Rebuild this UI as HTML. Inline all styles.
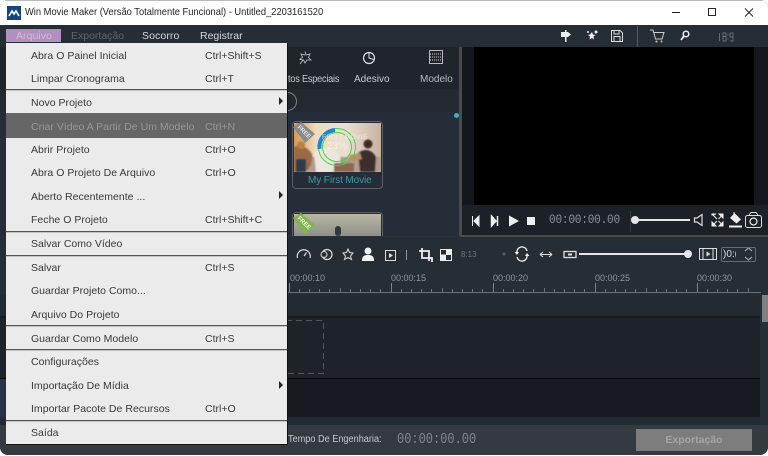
<!DOCTYPE html>
<html><head><meta charset="utf-8"><style>
html,body{margin:0;padding:0;width:768px;height:456px;overflow:hidden;background:#fff}
*{box-sizing:border-box}
body{font-family:"Liberation Sans","Noto Sans CJK SC",sans-serif;position:relative}
.a{position:absolute}
.t{position:absolute;white-space:nowrap;line-height:14px}
.m{position:absolute;left:31px;margin-top:1px;white-space:nowrap;font-size:10.5px;line-height:14px;color:#383838;letter-spacing:.02px}
.s{position:absolute;left:205px;margin-top:1px;white-space:nowrap;font-size:10.5px;line-height:14px;color:#383838}
.sep{position:absolute;left:6px;width:281px;background:#555;border-bottom:1px solid #c4c4c4;height:2px}
.arr{position:absolute;left:279px;width:0;height:0;border-left:4px solid #222;border-top:4px solid transparent;border-bottom:4px solid transparent}
.tc{position:absolute;font-size:9px;color:#8f979c;line-height:12px}
</style></head><body>
<div class="a" style="left:0;top:0;width:768px;height:455px;background:#2a3138;border-radius:8px;overflow:hidden;filter:blur(.3px)">

<!-- title bar -->
<div class="a" style="left:0;top:0;width:768px;height:25px;background:#fff;border-top:1px solid #bbb"></div>
<svg class="a" style="left:7px;top:6px" width="14" height="14" viewBox="0 0 14 14"><rect width="14" height="14" fill="#14477f"/><path d="M2 10 L5 5 L7 8 L9 5 L12 10" fill="none" stroke="#fff" stroke-width="1.6"/></svg>
<div class="t" style="left:25px;top:5px;font-size:10.5px;color:#222;transform:scaleX(.889);transform-origin:left">Win Movie Maker (Versão Totalmente Funcional) - Untitled_2203161520</div>
<svg class="a" style="left:670px;top:4px" width="98" height="20" viewBox="0 0 98 20"><path d="M2 8.500H10" stroke="#222" stroke-width="1.100"/><rect x="38.500" y="4.500" width="7" height="7" fill="none" stroke="#222" stroke-width="1"/><path d="M75 4.500L83 12.500M83 4.500L75 12.500" stroke="#222" stroke-width="1"/></svg>

<!-- menu bar -->
<div class="a" style="left:0;top:25px;width:768px;height:22px;background:#252d35"></div>
<div class="a" style="left:6px;top:29px;width:55px;height:13px;background:#b18fbe"></div>
<div class="t" style="left:16px;top:29px;font-size:10.5px;color:#d0bcd8;letter-spacing:.05px">Arquivo</div>
<div class="t" style="left:71px;top:29px;font-size:10.5px;color:#5f666c">Exportação</div>
<div class="t" style="left:142px;top:29px;font-size:10.5px;color:#d6d9db;letter-spacing:.1px">Socorro</div>
<div class="t" style="left:200px;top:29px;font-size:10.5px;color:#d6d9db">Registrar</div>

<!-- toolbar right icons -->
<svg class="a" style="left:555px;top:26px" width="200" height="21" viewBox="0 0 200 21">
<path d="M6 6H13L16 8.500L13 11H6Z M10 4H11.500V16H10Z" fill="#eee"/>
<path d="M37 6L38 8.500L40.500 9L38.500 10.500L39 13.500L37 12L34.500 13.500L35 10.500L33 9L35 8.500Z" fill="#eee"/><circle cx="41" cy="6" r="1.500" fill="#eee"/><circle cx="33" cy="6" r="1" fill="#eee"/>
<path d="M56.500 4.500H65L67.500 7V15.500H56.500ZM59 4.500V8H64V4.500M59 15.500V10.500H65V15.500" fill="none" stroke="#ddd" stroke-width="1"/>
<rect x="82" y="0" width="1" height="21" fill="#555b60"/>
<path d="M95 4H98L100.500 13H107L109 6.500H99" fill="none" stroke="#ccc" stroke-width="1"/><circle cx="101.500" cy="15.500" r="1" fill="#ccc"/><circle cx="106.500" cy="15.500" r="1" fill="#ccc"/>
<circle cx="131" cy="8" r="2.800" fill="none" stroke="#eee" stroke-width="1.500"/><path d="M129 10L126 14" stroke="#eee" stroke-width="1.800"/>
<path d="M164.500 7V15M168 7H171V15H168ZM168 10.500H171M178 7H175V11H178V7ZM178 7V15H175" fill="none" stroke="#7f868b" stroke-width=".7"/><circle cx="173" cy="9" r=".5" fill="#7f868b"/><circle cx="173" cy="13" r=".5" fill="#7f868b"/>
</svg>

<!-- library panel -->
<div class="a" style="left:0;top:47px;width:460px;height:42px;background:#1f252b"></div>
<div class="a" style="left:0;top:89px;width:460px;height:23px;background:#23292f"></div>
<div class="a" style="left:0;top:112px;width:459px;height:124px;background:#262c38"></div>
<div class="a" style="left:459px;top:47px;width:3px;height:189px;background:#4b4c49"></div>
<div class="a" style="left:287px;top:92px;width:10px;height:19px;border:1px solid #7c8388;border-left:0;border-radius:0 10px 10px 0"></div>
<div class="a" style="left:454px;top:113px;width:5px;height:5px;border-radius:3px;background:#37b5bb"></div>

<svg class="a" style="left:296px;top:49px" width="18" height="18" viewBox="0 0 18 18"><path d="M9 2.500L10 6L14 5L12.500 8.500L15 11L11 11L9 14L7.500 11L4 10.500L6.500 8L5 5L9 6M4 15L7 11" fill="none" stroke="#c6c9cb" stroke-width=".8"/></svg>
<div class="t" style="left:288px;top:73px;font-size:10px;color:#c6cbce;letter-spacing:-.2px;transform:scaleX(.91);transform-origin:left">tos Especiais</div>
<svg class="a" style="left:361px;top:50px" width="16" height="16" viewBox="0 0 16 16"><circle cx="8" cy="8" r="5.500" fill="none" stroke="#dfe2e3" stroke-width="1.200"/><path d="M8 3V8L12.500 9.500" fill="none" stroke="#dfe2e3" stroke-width="1"/></svg>
<div class="t" style="left:354px;top:73px;font-size:10px;color:#c6cbce">Adesivo</div>
<svg class="a" style="left:428px;top:49px" width="16" height="16" viewBox="0 0 16 16"><rect x="1.500" y="1.500" width="13" height="13" fill="none" stroke="#b8bbbd" stroke-width="1"/><path d="M2 5H14M2 8H14M2 11H14" stroke="#999" stroke-width="1.500" stroke-dasharray="1 1"/></svg>
<div class="t" style="left:420px;top:73px;font-size:10px;color:#b4b9bc">Modelo</div>

<!-- thumbnails -->
<div class="a" style="left:292px;top:121px;width:91px;height:68px;border:1px solid #5b6067;border-radius:4px;background:#262c38"></div>
<svg class="a" style="left:294px;top:123px" width="87" height="49" viewBox="0 0 87 49">
<defs><linearGradient id="sky" x1="0" x2="1" y1="0" y2="0"><stop offset="0" stop-color="#d59a55"/><stop offset=".25" stop-color="#efdcc0"/><stop offset=".6" stop-color="#eadfd2"/><stop offset="1" stop-color="#c9b3a1"/></linearGradient><filter id="b"><feGaussianBlur stdDeviation=".7"/></filter></defs>
<rect width="87" height="49" fill="url(#sky)"/>
<g filter="url(#b)">
<rect x="0" y="34" width="87" height="15" fill="#b29c8a"/>
<path d="M0 24C6 21 14 24 18 31C19 38 16 49 8 49H0Z" fill="#9a6a45"/>
<path d="M2 36H12V49H2Z" fill="#2d3a4d"/>
<circle cx="7" cy="22" r="4" fill="#b98044"/>
<path d="M20 30C28 22 42 24 46 34C48 42 44 49 36 49H22Z" fill="#ece6df"/>
<circle cx="74" cy="21" r="4.500" fill="#3c2a22"/>
<path d="M64 30C70 25 78 26 82 34L81 49H66Z" fill="#3e2f2d"/>
<path d="M55 32L66 30L68 36L58 38Z" fill="#bb8d68"/>
<rect x="40" y="40" width="20" height="9" fill="#8d6850"/>
</g></svg>
<svg class="a" style="left:316px;top:126px" width="44" height="44" viewBox="0 0 44 44"><circle cx="21" cy="21" r="18.500" fill="none" stroke="#49d24a" stroke-width="1"/><circle cx="21" cy="21" r="14.500" fill="none" stroke="#49d24a" stroke-width="1"/><path d="M3.500 23A17 17 0 0 1 19 4" fill="none" stroke="#1f83d8" stroke-width="4"/></svg>
<div class="t" style="left:322px;top:131px;font-size:6.500px;color:#f7f2ea;opacity:.8;letter-spacing:.4px">FIRST MOVIE</div>
<div class="t" style="left:327px;top:140px;font-size:10px;color:#f7f2ea;opacity:.9">23%</div>
<svg class="a" style="left:292px;top:121px" width="26" height="26" viewBox="0 0 26 26"><path d="M1 6L9 1L23 13L13 22Z" fill="#8a8a8a"/><text x="12" y="11" transform="rotate(45 12 11)" text-anchor="middle" dominant-baseline="middle" font-size="6" font-weight="700" fill="#e5e5e5" font-family="Liberation Sans">FREE</text></svg>
<div class="t" style="left:308px;top:174px;font-size:10px;color:#3d9ba3;letter-spacing:-.1px">My First Movie</div>

<div class="a" style="left:292px;top:212px;width:91px;height:24px;border:1px solid #5b6067;border-bottom:0;border-radius:4px 4px 0 0;background:#262c38"></div>
<div class="a" style="left:294px;top:214px;width:87px;height:22px;background:linear-gradient(#b9b7a5,#8e8f89)"></div>
<div class="a" style="left:335px;top:226px;width:6px;height:10px;background:#33363c;border-radius:3px"></div>
<svg class="a" style="left:292px;top:212px" width="26" height="24" viewBox="0 0 26 24"><path d="M1 6L9 1L23 13L13 22Z" fill="#7fb54c"/><text x="12" y="11" transform="rotate(45 12 11)" text-anchor="middle" dominant-baseline="middle" font-size="6" font-weight="700" fill="#eef5e0" font-family="Liberation Sans">FREE</text></svg>

<!-- preview -->
<div class="a" style="left:462px;top:47px;width:306px;height:189px;background:#14181c"></div>
<div class="a" style="left:474px;top:47px;width:280px;height:158px;background:#000"></div>
<div class="a" style="left:462px;top:205px;width:306px;height:31px;background:#1b2126"></div>
<div class="a" style="left:460px;top:235px;width:308px;height:2px;background:#4b4c49"></div>
<svg class="a" style="left:462px;top:205px" width="306" height="30" viewBox="0 0 306 30">
<path d="M10.500 11V21M12 16L17 11V21Z" fill="#eee" stroke="#eee" stroke-width="1"/>
<path d="M29.500 11L34 16L29.500 21ZM35.500 11V21" fill="#eee" stroke="#eee" stroke-width="1.500"/>
<path d="M47 10.500L57 16L47 21.500Z" fill="#eee"/>
<rect x="65" y="12" width="8" height="8" fill="#eee"/>
<rect x="168" y="6" width="1" height="21" fill="#33393e"/>
<rect x="172" y="14" width="56" height="2" fill="#e6e6e6"/><circle cx="173" cy="15" r="4" fill="#e6e6e6"/>
<path d="M232.500 13H235L240 9.500V20.500L235 17H232.500Z" fill="none" stroke="#ddd" stroke-width="1.200"/>
<path d="M250 10V9H254ZM261 9H257L261 13ZM250 21H254L250 17ZM261 21H257L261 17Z" fill="#eee" stroke="#eee"/>
<path d="M250.500 9.500L255 14M261 9.500L256.500 14M250.500 20.500L255 16M261 20.500L256.500 16" stroke="#eee" stroke-width="1"/>
<path d="M272.500 8L279 14.500L274.500 18.500L268 13Z" fill="#eee"/><path d="M272 7V10" stroke="#eee"/>
<rect x="267" y="20.500" width="13" height="2" fill="#eee"/>
<rect x="283.500" y="10.500" width="16" height="12" rx="2" fill="none" stroke="#ddd" stroke-width="1"/><circle cx="291.500" cy="16.500" r="3.500" fill="none" stroke="#eee" stroke-width="1.200"/><path d="M287 10L289 7.500H294L296 10" fill="none" stroke="#ddd"/>
</svg>
<div class="t" style="left:549px;top:213px;font-size:13px;color:#8a9094;font-family:'Liberation Mono',monospace;transform:scaleX(.86);transform-origin:left;letter-spacing:-.3px">00:00:00.00</div>

<!-- timeline -->
<div class="a" style="left:0;top:237px;width:768px;height:36px;background:#262e35"></div>
<div class="a" style="left:0;top:273px;width:768px;height:22px;background:#262e35"></div>
<svg class="a" style="left:288px;top:245px" width="480" height="20" viewBox="0 0 480 20">
<path d="M9.500 13A6.500 6.500 0 1 1 22 13M16 11L18.500 7.500" fill="none" stroke="#ddd" stroke-width="1.200"/>
<circle cx="39" cy="9.500" r="5" fill="none" stroke="#ddd" stroke-width="1.200"/><circle cx="36" cy="9.500" r="3" fill="#262e35" stroke="#ddd"/>
<path d="M60 4L61.500 7.500L65 8L62.500 11L63.500 14.500L60 12.500L56.500 14.500L57.500 11L55 8L58.500 7.500Z" fill="none" stroke="#ddd" stroke-width="1"/>
<circle cx="80" cy="6" r="3.500" fill="#f2f2f2"/><path d="M74 16C74 11 76 10 80 10C84 10 86 11 86 16Z" fill="#f2f2f2"/>
<rect x="97.500" y="5.500" width="10" height="10" fill="none" stroke="#ddd"/><path d="M101 8L105 10.500L101 13Z" fill="#ddd"/>
<rect x="118" y="5" width="1" height="10" fill="#8d9296"/>
<path d="M134 3V13H144V17M131 6H141V16" fill="none" stroke="#f0f0f0" stroke-width="1.800"/>
<rect x="152.500" y="4.500" width="11" height="11" fill="none" stroke="#eee"/><rect x="153" y="9.500" width="5" height="5.500" fill="#eee"/><rect x="158" y="5" width="5" height="5" fill="#eee"/>
<circle cx="216" cy="9" r="1.500" fill="#555c62"/>
<path d="M239 6A5 5 0 0 0 229 8M229 12A5 5 0 0 0 239 10" fill="none" stroke="#eee" stroke-width="1.300"/><path d="M226.500 7H231L229 10ZM241.500 11H237L239 8Z" fill="#eee"/>
<path d="M252 9.500H264M252 9.500L255 7M252 9.500L255 12M264 9.500L261 7M264 9.500L261 12" fill="none" stroke="#ddd"/>
<rect x="276" y="6.500" width="12" height="6" fill="none" stroke="#ddd" stroke-width="1.300"/><rect x="280" y="8.500" width="4" height="2" fill="#ddd"/>
<rect x="291" y="8" width="107" height="2" fill="#e6e6e6"/><circle cx="400" cy="9" r="4" fill="#e6e6e6"/>
<rect x="411.500" y="3.500" width="17" height="11" fill="none" stroke="#ddd"/><path d="M415 4V14M425 4V14" stroke="#ddd"/><path d="M418.500 6.500L422.500 9L418.500 11.500Z" fill="#ddd"/>
<path d="M457 6L460.500 3L464 6M457 12L460.500 15L464 12" fill="none" stroke="#bbb"/>
</svg>
<div class="a" style="left:721px;top:247px;width:35px;height:15px;border:1px solid #666c71;border-radius:2px"></div>
<div class="t" style="left:723px;top:248px;font-size:10px;color:#d6d8da;width:13px;overflow:hidden">)0:(</div>
<div class="t" style="left:461px;top:248px;font-size:8px;color:#6d7378">8:13</div>

<!-- ruler -->
<div class="tc" style="left:290px;top:272px">00:00:10</div>
<div class="tc" style="left:391px;top:272px">00:00:15</div>
<div class="tc" style="left:493px;top:272px">00:00:20</div>
<div class="tc" style="left:595px;top:272px">00:00:25</div>
<div class="tc" style="left:697px;top:272px">00:00:30</div>
<svg class="a" style="left:288px;top:282px" width="480" height="12" viewBox="0 0 480 12">
<path d="M0 10.500H473" stroke="#6a7075" stroke-width="1"/>
<path d="M1.500 1V10M103.500 1V10M205.500 1V10M307.500 1V10M409.500 1V10" stroke="#7e8488"/>
<path d="M11.500 7V10M21.500 7V10M31.500 7V10M41.500 7V10M52.500 6V10M62.500 7V10M72.500 7V10M82.500 7V10M92.500 7V10M113.500 7V10M123.500 7V10M133.500 7V10M143.500 7V10M154.500 6V10M164.500 7V10M174.500 7V10M184.500 7V10M194.500 7V10M215.500 7V10M225.500 7V10M235.500 7V10M245.500 7V10M256.500 6V10M266.500 7V10M276.500 7V10M286.500 7V10M296.500 7V10M317.500 7V10M327.500 7V10M337.500 7V10M347.500 7V10M358.500 6V10M368.500 7V10M378.500 7V10M388.500 7V10M398.500 7V10M419.500 7V10M429.500 7V10M439.500 7V10M449.500 7V10M460.500 6V10" stroke="#6a7075"/>
</svg>

<!-- tracks -->
<div class="a" style="left:0;top:295px;width:760px;height:22px;background:#222b32"></div>
<div class="a" style="left:0;top:316px;width:760px;height:2px;background:#161b20"></div>
<div class="a" style="left:0;top:318px;width:760px;height:60px;background:#1d2329"></div>
<div class="a" style="left:0;top:378px;width:760px;height:1px;background:#05070a"></div>
<div class="a" style="left:0;top:379px;width:760px;height:38px;background:#171b21"></div>
<div class="a" style="left:0;top:379px;width:6px;height:46px;background:#2a3045"></div>
<div class="a" style="left:0;top:417px;width:760px;height:8px;background:#222b32"></div>
<div class="a" style="left:760px;top:295px;width:8px;height:130px;background:#262e35"></div>
<div class="a" style="left:762px;top:295px;width:6px;height:27px;background:#7d8184"></div>
<svg class="a" style="left:286px;top:319px" width="40" height="56" viewBox="0 0 40 56"><path d="M0 1.500H37.500V54.500H0" fill="none" stroke="#50565c" stroke-width="1" stroke-dasharray="6 4"/></svg>

<!-- footer -->
<div class="a" style="left:0;top:425px;width:768px;height:31px;background:#343a40"></div>
<div class="t" style="left:288px;top:433px;font-size:10px;color:#c4c8ca;transform:scaleX(.915);transform-origin:left">Tempo De Engenharia:</div>
<div class="t" style="left:397px;top:433px;font-size:15px;color:#81878b;font-family:'Liberation Mono',monospace;transform:scaleX(.8);transform-origin:left">00:00:00.00</div>
<div class="a" style="left:636px;top:429px;width:116px;height:22px;background:#7d7d7d"></div>
<div class="t" style="left:636px;top:433px;width:116px;text-align:center;font-size:10.5px;font-weight:700;color:#a5a5a5">Exportação</div>

<!-- dropdown menu -->
<div class="a" style="left:6px;top:43px;width:282px;height:402px;background:#ebebeb;border-right:1px solid #111;border-bottom:1px solid #111"></div>
<div class="a" style="left:6px;top:113px;width:281px;height:25px;background:#666"></div>
<div class="sep" style="top:89px"></div>
<div class="sep" style="top:231px"></div>
<div class="sep" style="top:255px"></div>
<div class="sep" style="top:325px"></div>
<div class="sep" style="top:349px"></div>
<div class="sep" style="top:420px"></div>

<div class="m" style="top:48px">Abra O Painel Inicial</div><div class="s" style="top:48px">Ctrl+Shift+S</div>
<div class="m" style="top:71px">Limpar Cronograma</div><div class="s" style="top:71px">Ctrl+T</div>
<div class="m" style="top:95px">Novo Projeto</div><div class="arr" style="top:97px"></div>
<div class="m" style="top:119px;color:#979797">Criar Vídeo A Partir De Um Modelo</div><div class="s" style="top:119px;color:#979797">Ctrl+N</div>
<div class="m" style="top:142px">Abrir Projeto</div><div class="s" style="top:142px">Ctrl+O</div>
<div class="m" style="top:165px">Abra O Projeto De Arquivo</div><div class="s" style="top:165px">Ctrl+O</div>
<div class="m" style="top:189px">Aberto Recentemente ...</div><div class="arr" style="top:191px"></div>
<div class="m" style="top:212px">Feche O Projeto</div><div class="s" style="top:212px">Ctrl+Shift+C</div>
<div class="m" style="top:236px">Salvar Como Vídeo</div>
<div class="m" style="top:260px">Salvar</div><div class="s" style="top:260px">Ctrl+S</div>
<div class="m" style="top:283px">Guardar Projeto Como...</div>
<div class="m" style="top:307px">Arquivo Do Projeto</div>
<div class="m" style="top:331px">Guardar Como Modelo</div><div class="s" style="top:331px">Ctrl+S</div>
<div class="m" style="top:354px">Configurações</div>
<div class="m" style="top:378px">Importação De Mídia</div><div class="arr" style="top:381px"></div>
<div class="m" style="top:401px">Importar Pacote De Recursos</div><div class="s" style="top:401px">Ctrl+O</div>
<div class="m" style="top:425px">Saída</div>
</div>
</body></html>
